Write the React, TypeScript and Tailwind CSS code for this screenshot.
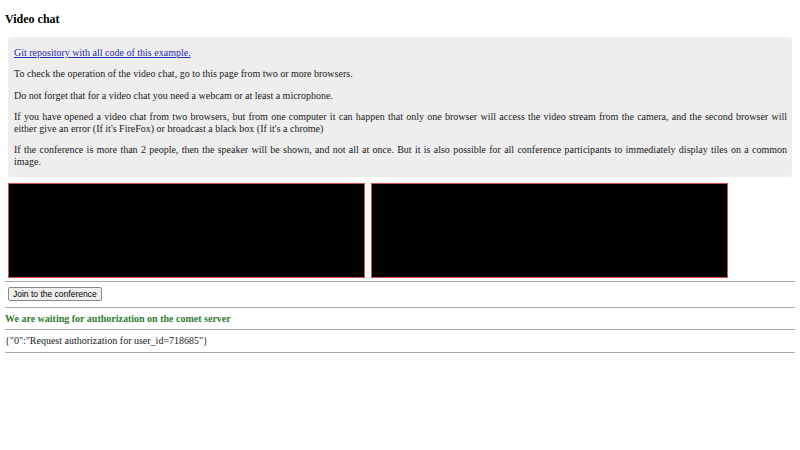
import React from 'react';

const App: React.FC = () => {
  return (
    <div className="px-[5px] pt-[12px] font-['Liberation_Serif',serif] text-[10px] leading-[12px] text-black bg-white min-h-[450px]">
      <h3 className="text-[12px] leading-[14px] font-bold">Video chat</h3>

      <div className="mt-[11px] mx-[3px] rounded-[4px] bg-[#eeeeee] pl-[6px] pr-[5px] pt-[10px] pb-[9px] text-justify text-[#1a1a1a]">
        <p>
          <a href="#" className="text-[#2a2ab8] underline">Git repository with all code of this example.</a>
        </p>
        <p className="mt-[9px]">To check the operation of the video chat, go to this page from two or more browsers.</p>
        <p className="mt-[10px]">Do not forget that for a video chat you need a webcam or at least a microphone.</p>
        <p className="mt-[9px]">
          If you have opened a video chat from two browsers, but from one computer it can happen that only one browser will access the video stream from the camera, and the second browser will either give an error (If it's FireFox) or broadcast a black box (If it's a chrome)
        </p>
        <p className="mt-[9px]">
          If the conference is more than 2 people, then the speaker will be shown, and not all at once. But it is also possible for all conference participants to immediately display tiles on a common image.
        </p>
      </div>

      <div className="mt-[6px] mx-[3px] flex gap-[6px]">
        <div className="w-[357px] h-[95px] bg-black border border-[#d05050]" />
        <div className="w-[357px] h-[95px] bg-black border border-[#d05050]" />
      </div>

      <hr className="mt-[3px] border-t border-[#aaa]" />
      <div className="pt-[5px] pb-[6px] px-[3px] flex">
        <button className="font-['Liberation_Sans',sans-serif] text-[8.5px] leading-[12px] px-[4px] border border-[#888] rounded-[2px] bg-[#efefef] text-black">
          Join to the conference
        </button>
      </div>
      <hr className="border-t border-[#aaa]" />
      <div className="pt-[5px] pb-[4px] font-bold text-[#2e7d32]">We are waiting for authorization on the comet server</div>
      <hr className="border-t border-[#aaa]" />
      <div className="pt-[5px] pb-[5px] text-[#1a1a1a]">{'{"0":"Request authorization for user_id=718685"}'}</div>
      <hr className="border-t border-[#aaa]" />
    </div>
  );
};

export default App;
